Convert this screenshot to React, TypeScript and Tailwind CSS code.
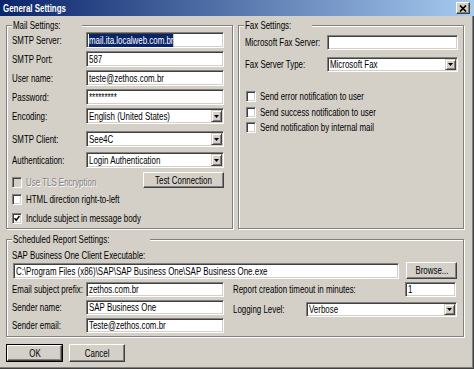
import React from "react";

const sunken =
  "bg-white border border-t-[#808080] border-l-[#808080] border-r-white border-b-white shadow-[inset_1px_1px_0_#404040,inset_-1px_-1px_0_#d4d0c8]";
const raised =
  "bg-[#d4d0c8] border border-t-white border-l-white border-r-[#404040] border-b-[#404040] shadow-[inset_-1px_-1px_0_#808080]";

function T({ children, center, className }: { children: React.ReactNode; center?: boolean; className?: string }) {
  return (
    <span
      className={`inline-block whitespace-nowrap leading-[13px] scale-x-[0.72] ${center ? "origin-center" : "origin-left"} ${className ?? ""}`}
    >
      {children}
    </span>
  );
}

function TextBox({ size, value, selected }: { size: string; value?: string; selected?: boolean }) {
  return (
    <div className={`${sunken} ${size} flex items-center pl-[2px] overflow-hidden`}>
      {selected ? <T className="bg-[#0a246a] text-white">{value}</T> : <T>{value}</T>}
    </div>
  );
}

function Select({ size, value }: { size: string; value: string }) {
  return (
    <div className={`${sunken} ${size} flex items-stretch overflow-hidden`}>
      <div className="flex-1 flex items-center pl-[2px] overflow-hidden">
        <T>{value}</T>
      </div>
      <div className="w-[11px] my-[1px] mr-[1px] bg-[#d4d0c8] border border-t-[#d4d0c8] border-l-[#d4d0c8] border-r-[#404040] border-b-[#404040] shadow-[inset_1px_1px_0_#fff,inset_-1px_-1px_0_#808080] flex items-center justify-center">
        <svg width="5" height="3" viewBox="0 0 5 3">
          <path d="M0 0h5L2.5 3z" fill="#000" />
        </svg>
      </div>
    </div>
  );
}

function Check({ label, checked, disabled, extra }: { label: string; checked?: boolean; disabled?: boolean; extra?: string }) {
  return (
    <div className={`flex items-center h-[13px] ${extra ?? ""}`}>
      <div
        className={`w-[10px] h-[11px] border border-t-[#808080] border-l-[#808080] border-r-white border-b-white shadow-[inset_1px_1px_0_#404040,inset_-1px_-1px_0_#d4d0c8] flex items-center justify-center ${
          disabled ? "bg-[#d4d0c8]" : "bg-white"
        }`}
      >
        {checked && (
          <svg width="6" height="7" viewBox="0 0 6 7">
            <path d="M0.5 3.2 L2.2 5.2 L5.5 1" stroke="#000" strokeWidth="1.5" fill="none" />
          </svg>
        )}
      </div>
      <span className="ml-[4px]">
        <T className={disabled ? "text-[#808080] [text-shadow:1px_1px_0_#fff]" : ""}>{label}</T>
      </span>
    </div>
  );
}

function Group({ label, className, children }: { label: string; className: string; children: React.ReactNode }) {
  return (
    <div className={`relative border border-[#808080] shadow-[inset_1px_1px_0_#fff,1px_1px_0_#fff] ${className}`}>
      <span className="absolute top-[-7px] left-[5px] pl-[1px] pr-[3px] bg-[#d4d0c8] leading-[13px] w-max">
        <T>{label}</T>
      </span>
      {children}
    </div>
  );
}

function Row({ label, labelW, children, extra }: { label: string; labelW: string; children: React.ReactNode; extra?: string }) {
  return (
    <div className={`flex items-center ${extra ?? ""}`}>
      <span className={`${labelW} shrink-0`}>
        <T>{label}</T>
      </span>
      {children}
    </div>
  );
}

export default function App() {
  return (
    <div className="w-[474px] h-[369px] bg-[#d4d0c8] text-[11px] text-black [font-family:'Liberation_Sans',Arial,sans-serif] flex flex-col overflow-hidden shadow-[inset_-1px_-1px_0_#404040,inset_-2px_-2px_0_#808080]">
      {/* title bar */}
      <div className="h-[16px] shrink-0 flex items-center justify-between bg-[linear-gradient(to_right,#0a246a,#a6caf0)]">
        <span className="pl-[3px] text-white font-bold">
          <T className="scale-x-[0.8]">General Settings</T>
        </span>
        <div className={`${raised} w-[14px] h-[12px] mr-[4px] flex items-center justify-center`}>
          <svg width="8" height="7" viewBox="0 0 8 7">
            <path d="M1 0.5 L7 6.5 M7 0.5 L1 6.5" stroke="#000" strokeWidth="1.7" />
          </svg>
        </div>
      </div>

      {/* top groups */}
      <div className="flex gap-[5px] ml-[6px] mt-[9px]">
        <Group label="Mail Settings:" className="w-[227px] h-[204px]">
          <div className="flex flex-col pl-[5px]">
            <Row label="SMTP Server:" labelW="w-[74px]" extra="h-[16px] mt-[6px]">
              <TextBox size="w-[138px] h-[16px]" value="mail.ita.localweb.com.br" selected />
            </Row>
            <Row label="SMTP Port:" labelW="w-[74px]" extra="h-[16px] mt-[3px]">
              <TextBox size="w-[138px] h-[16px]" value="587" />
            </Row>
            <Row label="User name:" labelW="w-[74px]" extra="h-[16px] mt-[3px]">
              <TextBox size="w-[138px] h-[16px]" value="teste@zethos.com.br" />
            </Row>
            <Row label="Password:" labelW="w-[74px]" extra="h-[16px] mt-[3px]">
              <TextBox size="w-[138px] h-[16px]" value="*********" />
            </Row>
            <Row label="Encoding:" labelW="w-[74px]" extra="h-[16px] mt-[3px]">
              <Select size="w-[138px] h-[16px]" value="English (United States)" />
            </Row>
            <Row label="SMTP Client:" labelW="w-[74px]" extra="h-[16px] mt-[7px]">
              <Select size="w-[138px] h-[16px]" value="See4C" />
            </Row>
            <Row label="Authentication:" labelW="w-[74px]" extra="h-[16px] mt-[5px]">
              <Select size="w-[138px] h-[16px]" value="Login Authentication" />
            </Row>
            <div className="flex justify-between w-[212px] h-[17px] mt-[4px]">
              <Check label="Use TLS Encryption" disabled extra="self-end" />
              <div className={`${raised} w-[81px] h-[16px] flex items-center justify-center`}>
                <T center>Test Connection</T>
              </div>
            </div>
            <Check label="HTML direction right-to-left" extra="mt-[4px]" />
            <Check label="Include subject in message body" checked extra="mt-[6px]" />
          </div>
        </Group>

        <Group label="Fax Settings:" className="w-[226px] h-[204px]">
          <div className="flex flex-col pl-[6px]">
            <Row label="Microsoft Fax Server:" labelW="w-[82px]" extra="h-[15px] mt-[9px]">
              <TextBox size="w-[131px] h-[15px]" value="" />
            </Row>
            <Row label="Fax Server Type:" labelW="w-[82px]" extra="h-[15px] mt-[7px]">
              <Select size="w-[131px] h-[15px]" value="Microsoft Fax" />
            </Row>
            <Check label="Send error notification to user" extra="ml-[1px] mt-[18px]" />
            <Check label="Send success notification to user" extra="ml-[1px] mt-[3px]" />
            <Check label="Send notification by internal mail" extra="ml-[1px] mt-[2px]" />
          </div>
        </Group>
      </div>

      {/* scheduled report */}
      <Group label="Scheduled Report Settings:" className="ml-[6px] mt-[10px] w-[458px] h-[98px] shrink-0">
        <div className="flex flex-col pl-[5px]">
          <div className="mt-[9px] h-[12px] flex items-center">
            <T>SAP Business One Client Executable:</T>
          </div>
          <div className="flex items-start mt-[1px]">
            <div className="ml-[1px] mt-[1px]">
              <TextBox size="w-[386px] h-[16px]" value="C:\Program Files (x86)\SAP\SAP Business One\SAP Business One.exe" />
            </div>
            <div className={`${raised} ml-[7px] w-[51px] h-[17px] flex items-center justify-center`}>
              <T center>Browse...</T>
            </div>
          </div>
          <div className="flex mt-[3px]">
            <div className="flex flex-col w-[221px] shrink-0">
              <Row label="Email subject prefix:" labelW="w-[74px]" extra="h-[15px]">
                <TextBox size="w-[138px] h-[15px]" value="zethos.com.br" />
              </Row>
              <Row label="Sender name:" labelW="w-[74px]" extra="h-[15px] mt-[3px]">
                <TextBox size="w-[138px] h-[15px]" value="SAP Business One" />
              </Row>
              <Row label="Sender email:" labelW="w-[74px]" extra="h-[15px] mt-[3px]">
                <TextBox size="w-[138px] h-[15px]" value="Teste@zethos.com.br" />
              </Row>
            </div>
            <div className="flex flex-col">
              <Row label="Report creation timeout in minutes:" labelW="w-[172px]" extra="h-[15px]">
                <TextBox size="w-[51px] h-[15px]" value="1" />
              </Row>
              <Row label="Logging Level:" labelW="w-[73px]" extra="h-[15px] mt-[5px]">
                <Select size="w-[151px] h-[15px]" value="Verbose" />
              </Row>
            </div>
          </div>
        </div>
      </Group>

      {/* buttons */}
      <div className="flex gap-[6px] ml-[6px] mt-[7px]">
        <div className="w-[57px] h-[18px] border border-black">
          <div className={`${raised} w-full h-full flex items-center justify-center`}>
            <T center>OK</T>
          </div>
        </div>
        <div className={`${raised} w-[56px] h-[18px] flex items-center justify-center`}>
          <T center>Cancel</T>
        </div>
      </div>
    </div>
  );
}
